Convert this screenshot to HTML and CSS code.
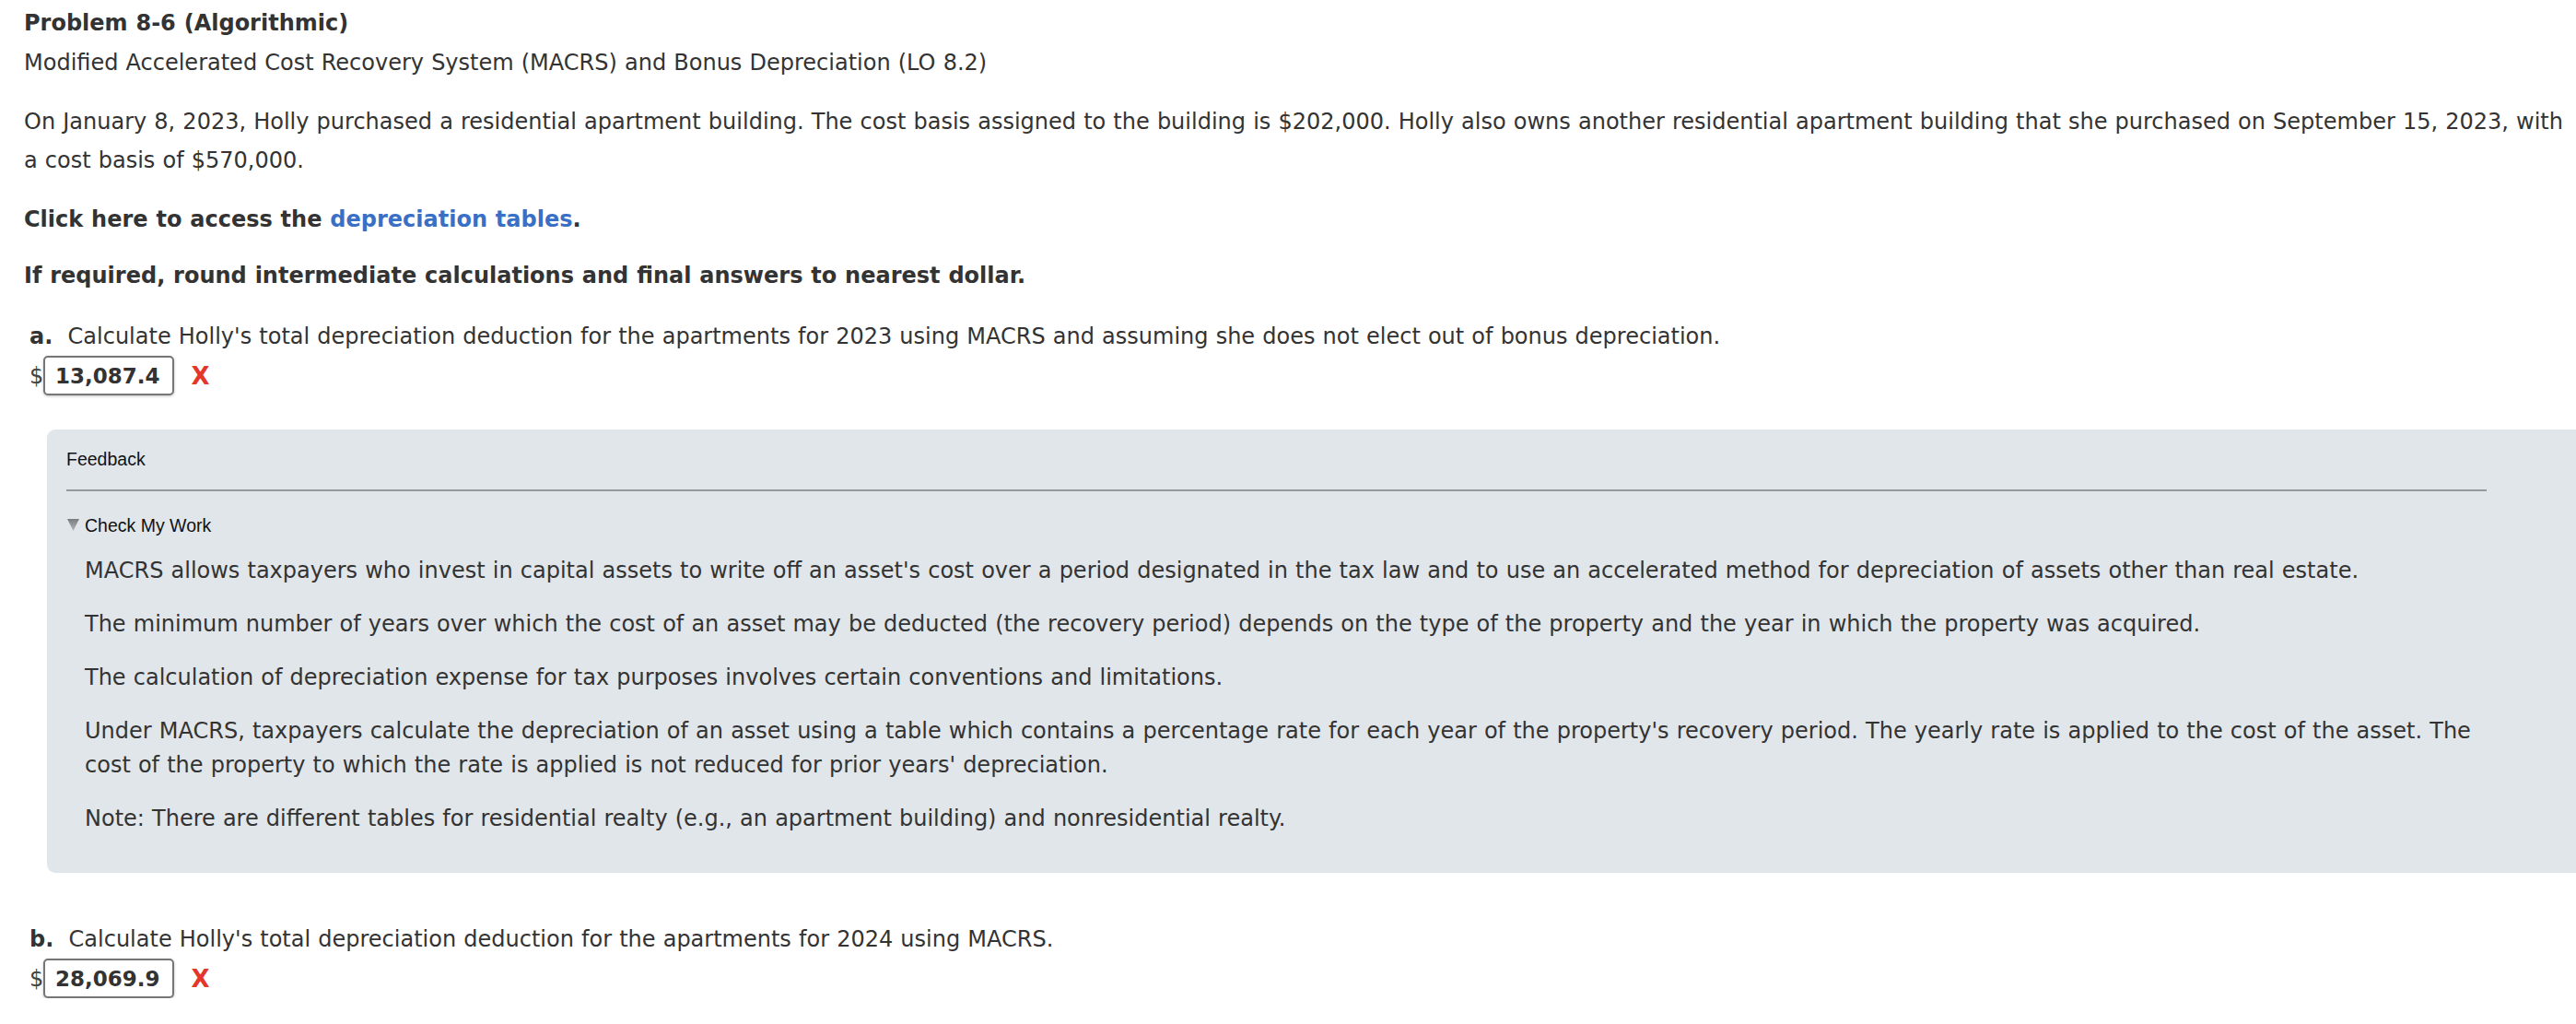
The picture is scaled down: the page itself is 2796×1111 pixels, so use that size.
FILE: index.html
```html
<!DOCTYPE html>
<html>
<head>
<meta charset="utf-8">
<title>Problem 8-6 (Algorithmic)</title>
<link rel="stylesheet" href="styles.css">
</head>
<body>
<div class="page">
  <h1 class="title">Problem 8-6 (Algorithmic)</h1>
  <p class="subtitle">Modified Accelerated Cost Recovery System (MACRS) and Bonus Depreciation (LO 8.2)</p>
  <p class="para intro">On January 8, 2023, Holly purchased a residential apartment building. The cost basis assigned to the building is $202,000. Holly also owns another residential apartment building that she purchased on September 15, 2023, with a cost basis of $570,000.</p>
  <p class="para strong">Click here to access the <a class="link" href="#">depreciation tables</a>.</p>
  <p class="para strong para-tight">If required, round intermediate calculations and final answers to nearest dollar.</p>

  <div class="question">
    <div class="q-text"><b>a.</b>&nbsp; Calculate Holly's total depreciation deduction for the apartments for 2023 using MACRS and assuming she does not elect out of bonus depreciation.</div>
    <div class="answer">
      <span class="dollar">$</span>
      <span class="input">13,087.4</span>
      <span class="wrong">X</span>
    </div>
  </div>

  <div class="feedback">
    <div class="fb-head">Feedback</div>
    <div class="fb-rule"></div>
    <div class="fb-toggle">
      <svg class="tri" width="13" height="13" viewBox="0 0 13 13">
        <defs>
          <linearGradient id="tg" x1="0" y1="0" x2="0" y2="1">
            <stop offset="0" stop-color="#7a7d80"/>
            <stop offset="1" stop-color="#b4b7ba"/>
          </linearGradient>
        </defs>
        <polygon points="0,0 13,0 6.5,13" fill="url(#tg)"/>
      </svg>
      <span>Check My Work</span>
    </div>
    <div class="fb-body">
      <p>MACRS allows taxpayers who invest in capital assets to write off an asset's cost over a period designated in the tax law and to use an accelerated method for depreciation of assets other than real estate.</p>
      <p>The minimum number of years over which the cost of an asset may be deducted (the recovery period) depends on the type of the property and the year in which the property was acquired.</p>
      <p>The calculation of depreciation expense for tax purposes involves certain conventions and limitations.</p>
      <p>Under MACRS, taxpayers calculate the depreciation of an asset using a table which contains a percentage rate for each year of the property's recovery period. The yearly rate is applied to the cost of the asset. The cost of the property to which the rate is applied is not reduced for prior years' depreciation.</p>
      <p>Note: There are different tables for residential realty (e.g., an apartment building) and nonresidential realty.</p>
    </div>
  </div>

  <div class="question question-b">
    <div class="q-text"><b>b.</b>&nbsp; Calculate Holly's total depreciation deduction for the apartments for 2024 using MACRS.</div>
    <div class="answer">
      <span class="dollar">$</span>
      <span class="input">28,069.9</span>
      <span class="wrong">X</span>
    </div>
  </div>
</div>
</body>
</html>
```
FILE: styles.css
```css
html, body {
  margin: 0;
  padding: 0;
  background: #ffffff;
}

body {
  width: 2796px;
  overflow: hidden;
  font-family: "DejaVu Sans", Verdana, sans-serif;
  font-size: 24px;
  word-spacing: 0.5px;
  color: #333333;
}

.page {
  padding: 4px 0 0 26px;
}

.title {
  margin: 0;
  font-size: 24px;
  font-weight: bold;
  line-height: 43px;
}

.subtitle {
  margin: 0;
  line-height: 42px;
}

.para {
  margin: 22px 0 0 0;
  line-height: 42px;
}

.para-tight {
  margin-top: 19px;
}

.strong {
  font-weight: bold;
}

.link {
  color: #3a6fc6;
  text-decoration: none;
}

.question {
  margin-top: 24px;
  padding-left: 6px;
}

.question-b {
  margin-top: 51px;
}

.q-text {
  line-height: 42px;
}

.answer {
  display: flex;
  align-items: center;
  height: 43px;
}

.dollar {
  color: #444444;
  width: 15px;
}

.input {
  box-sizing: border-box;
  height: 43px;
  padding: 2px 13px 0 11px;
  font-size: 23px;
  line-height: 37px;
  border: 2px solid #767676;
  border-radius: 5px;
  font-weight: bold;
  color: #333333;
  background: #ffffff;
  box-shadow: 0 1px 3px rgba(0, 0, 0, 0.25);
}

.wrong {
  margin-left: 19px;
  font-family: "DejaVu Sans", sans-serif;
  font-weight: bold;
  font-size: 26px;
  color: #e3372b;
  line-height: 26px;
}

.feedback {
  margin: 37px 0 0 25px;
  padding: 20px 97px 40px 21px;
  background: #e1e6ea;
  border-radius: 9px 0 0 9px;
}

.fb-head,
.fb-toggle {
  font-family: "Liberation Sans", Arial, sans-serif;
  font-size: 19.5px;
  line-height: 24px;
  word-spacing: 0;
  color: #111111;
}

.fb-rule {
  margin-top: 21px;
  height: 2px;
  background: #95999d;
}

.fb-toggle {
  margin-top: 25px;
  display: flex;
  align-items: center;
  gap: 6px;
  padding-left: 1px;
}

.tri {
  display: block;
  margin-top: -2px;
}

.fb-body {
  padding-left: 20px;
  margin-top: 19px;
}

.fb-body p {
  margin: 0 0 21px 0;
  line-height: 37px;
  color: #333333;
}

.fb-body p:last-child {
  margin-bottom: 0;
}
```
